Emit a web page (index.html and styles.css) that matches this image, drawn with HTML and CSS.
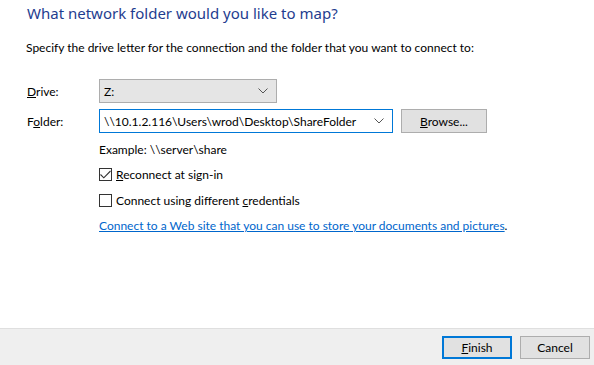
FILE: index.html
```html
<!DOCTYPE html>
<html lang="en">
<head>
  <meta charset="UTF-8" />
  <title>Map Network Drive</title>
  <link rel="stylesheet" href="styles.css">
</head>
<body>

  <div class="wizard">
    <div class="content">
      <h1 class="title">What network folder would you like to map?</h1>
      <p class="intro">Specify the drive letter for the connection and the folder that you want to connect to:</p>

      <div class="row">
        <label class="label"><u>D</u>rive:</label>
        <div class="select drive">
          <span>Z:</span>
          <svg class="chev" width="10" height="6" viewBox="0 0 10 6"><path d="M0.5 0.5 L5 5 L9.5 0.5" fill="none" stroke="#555" stroke-width="1"/></svg>
        </div>
      </div>

      <div class="row">
        <label class="label">F<u>o</u>lder:</label>
        <div class="select folder">
          <span>\\10.1.2.116\Users\wrod\Desktop\ShareFolder</span>
          <svg class="chev" width="10" height="6" viewBox="0 0 10 6"><path d="M0.5 0.5 L5 5 L9.5 0.5" fill="none" stroke="#555" stroke-width="1"/></svg>
        </div>
        <button class="btn browse"><u>B</u>rowse...</button>
      </div>

      <div class="options">
        <p class="example">Example: \\server\share</p>
        <div class="check">
          <span class="box">
            <svg width="11" height="9" viewBox="0 0 11 9"><path d="M0.5 4.5 L3.8 7.8 L10.5 1" fill="none" stroke="#333" stroke-width="1.1"/></svg>
          </span>
          <span><u>R</u>econnect at sign-in</span>
        </div>
        <div class="check">
          <span class="box"></span>
          <span>Connect using different <u>c</u>redentials</span>
        </div>
        <p class="link-line"><a href="#">Connect to a Web site that you can use to store your documents and pictures</a>.</p>
      </div>
    </div>

    <div class="footer">
      <button class="btn primary"><u>F</u>inish</button>
      <button class="btn">Cancel</button>
    </div>
  </div>

</body>
</html>
```

FILE: styles.css
```css
body {
  margin: 0;
  padding: 0;
  font-family: Lato, "Noto Sans", Arial, sans-serif;
  font-size: 12px;
  color: #000;
  background-color: white;
}

.wizard {
  width: 594px;
  height: 365px;
  display: flex;
  flex-direction: column;
}

.content {
  flex: 1;
  padding: 2px 0 0 27px;
}

.title {
  margin: 0;
  font-family: "Noto Sans", Arial, sans-serif;
  font-weight: normal;
  font-size: 15px;
  color: #1f3d8f;
  line-height: 22px;
}

.intro {
  margin: 16px 0 23px -1px;
  line-height: 16px;
}

.row {
  display: flex;
  align-items: center;
  height: 24px;
  margin-bottom: 6px;
}

.label {
  width: 72px;
}

.select {
  height: 24px;
  box-sizing: border-box;
  display: flex;
  align-items: center;
  justify-content: space-between;
  padding: 0 8px 0 4px;
}

.drive {
  width: 178px;
  background-color: #e5e5e5;
  border: 1px solid #adadad;
}

.folder {
  width: 294px;
  border: 1px solid #0078d7;
  background-color: white;
}

.chev {
  display: block;
}

.btn {
  font-family: inherit;
  font-size: 12px;
  background-color: #e1e1e1;
  border: 1px solid #adadad;
  height: 24px;
  padding: 0;
  color: #000;
}

.browse {
  width: 86px;
  margin-left: 8px;
}

.options {
  padding-left: 72px;
}

.example {
  margin: 9px 0 8px;
  line-height: 16px;
}

.check {
  display: flex;
  align-items: center;
  height: 16px;
  margin-bottom: 10px;
}

.box {
  width: 13px;
  height: 13px;
  box-sizing: border-box;
  border: 1px solid #333;
  margin-right: 4px;
  display: flex;
  align-items: center;
  justify-content: center;
}

.link-line {
  margin: 9px 0 0;
  line-height: 16px;
}

.link-line a {
  color: #0066cc;
}

.footer {
  height: 36px;
  border-top: 1px solid #dfdfdf;
  background-color: #efefef;
  display: flex;
  justify-content: flex-end;
  align-items: center;
  gap: 8px;
  padding-right: 4px;
}

.footer .btn {
  width: 70px;
  height: 23px;
}

.primary {
  border: 2px solid #0078d7;
}
```
